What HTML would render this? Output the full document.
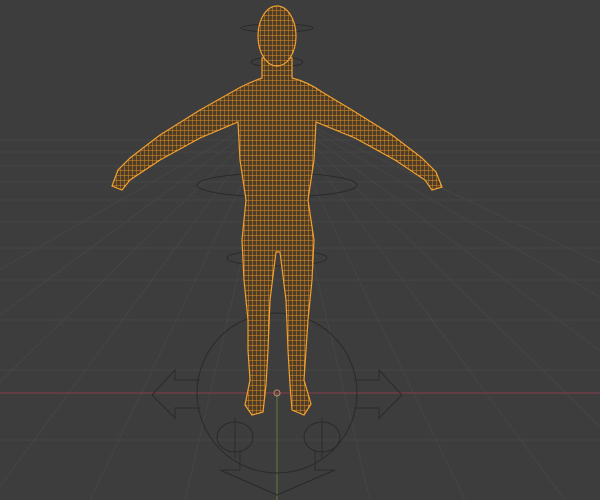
<!DOCTYPE html>
<html><head><style>html,body{margin:0;padding:0;background:#3d3d3d;width:600px;height:500px;overflow:hidden}</style></head>
<body>
<svg width="600" height="500" viewBox="0 0 600 500" xmlns="http://www.w3.org/2000/svg">
<defs>
<pattern id="mesh" width="4" height="5" patternUnits="userSpaceOnUse">
<rect width="4" height="5" fill="#4e3c26"/>
<path d="M0 0H4M0 0V5" stroke="#e08f28" stroke-width="0.9"/>
</pattern>
</defs>
<rect width="600" height="500" fill="#3d3d3d"/>
<g stroke="#454545" stroke-width="1" fill="none">
<path d="M0 140H600M0 152H600M0 166H600M0 182H600M0 200H600M0 222H600M0 248H600M0 280H600M0 320H600M0 370H600M0 440H600"/>
<path d="M277 110L-400 500M277 110L-250 500M277 110L-120 500M277 110L-10 500M277 110L90 500M277 110L185 500M277 110L370 500M277 110L465 500M277 110L565 500M277 110L675 500M277 110L800 500M277 110L950 500M277 110L1100 500"/>
</g>
<line x1="0" y1="393" x2="600" y2="393" stroke="#8c3a4c" stroke-width="1"/>
<line x1="277" y1="393" x2="277" y2="500" stroke="#5a7a3a" stroke-width="1"/>
<g stroke="#2a2a2a" stroke-width="1" fill="none">
<ellipse cx="277" cy="28" rx="36" ry="4"/>
<ellipse cx="277" cy="62" rx="26" ry="5"/>
<ellipse cx="277" cy="185" rx="80" ry="12"/>
<ellipse cx="277" cy="258" rx="50" ry="8"/>
<circle cx="277" cy="393" r="80"/>
<path d="M200 380L175 380L175 370L152 395L175 418L175 408L200 408"/>
<path d="M354 380L379 380L379 370L402 395L379 418L379 408L354 408"/>
<path d="M240 450L240 470L220 470L277 495L335 470L315 470L315 450"/>
<ellipse cx="235" cy="437" rx="18" ry="15"/><line x1="235" y1="418" x2="235" y2="458"/>
<ellipse cx="322" cy="437" rx="18" ry="15"/><line x1="322" y1="418" x2="322" y2="458"/>
</g>
<circle cx="277" cy="393" r="3" fill="none" stroke="#d08a6a"/>
<g fill="url(#mesh)" stroke="#f0a030" stroke-width="1.2">
<path d="M262 58L262 78Q245 84 232 92L200 110L160 135L130 158L118 170L112 186L122 190L130 180L160 160L200 138L238 122L240 160L246 200L242 240L244 280L248 320L248 350L250 380L245 405L252 415L263 412L266 385L268 350L270 300L276 252L280 252L286 300L288 350L290 385L292 410L304 415L311 404L304 380L306 350L308 320L312 280L314 240L308 200L314 160L316 122L355 138L395 160L425 180L432 190L442 187L436 172L422 158L392 135L352 110L322 92Q308 82 292 78L292 58Z"/>
<ellipse cx="277" cy="36" rx="19" ry="30"/>
</g>
</svg>
</body></html>
